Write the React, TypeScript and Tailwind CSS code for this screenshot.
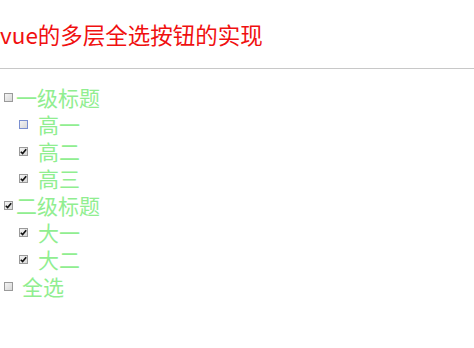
import React from "react";

type BoxProps = { checked?: boolean; focus?: boolean };

function Box({ checked, focus }: BoxProps) {
  return (
    <span
      className={
        "inline-flex h-[9px] w-[9px] shrink-0 items-center justify-center border bg-gradient-to-br from-[#f4f4f4] to-[#d8d8d8] " +
        (focus ? "border-[#7a8fd0]" : "border-[#9a9a9a]")
      }
    >
      {checked && (
        <svg width="7" height="7" viewBox="0 0 7 7">
          <path d="M0.8 3.8 L2.6 5.6 L6.2 1.2" stroke="#111" strokeWidth="1.6" fill="none" />
        </svg>
      )}
    </span>
  );
}

function Row({
  indent,
  checked,
  focus,
  label,
  gap,
}: {
  indent: boolean;
  checked?: boolean;
  focus?: boolean;
  label: string;
  gap: string;
}) {
  return (
    <div className={"flex h-[27px] items-center " + (indent ? "pl-[19px]" : "pl-[4px]")}>
      <Box checked={checked} focus={focus} />
      <span className={"text-[21px] leading-[27px] text-[#90ee90] " + gap}>{label}</span>
    </div>
  );
}

export default function App() {
  const font = { fontFamily: '"Noto Sans CJK SC", "Noto Sans", sans-serif' };
  return (
    <div className="h-[348px] w-[474px] bg-white" style={font}>
      <div className="pt-[18px] text-[22.5px] leading-[32px] text-[#f01010]">vue的多层全选按钮的实现</div>
      <div className="mt-[18px] h-[1px] bg-[#c8c8c8]" />
      <div className="pt-[15px]">
        <Row indent={false} label="一级标题" gap="ml-[3px]" />
        <Row indent focus label="高一" gap="ml-[10px]" />
        <Row indent checked label="高二" gap="ml-[10px]" />
        <Row indent checked label="高三" gap="ml-[10px]" />
        <Row indent={false} checked label="二级标题" gap="ml-[3px]" />
        <Row indent checked label="大一" gap="ml-[10px]" />
        <Row indent checked label="大二" gap="ml-[10px]" />
        <Row indent={false} label="全选" gap="ml-[9px]" />
      </div>
    </div>
  );
}
